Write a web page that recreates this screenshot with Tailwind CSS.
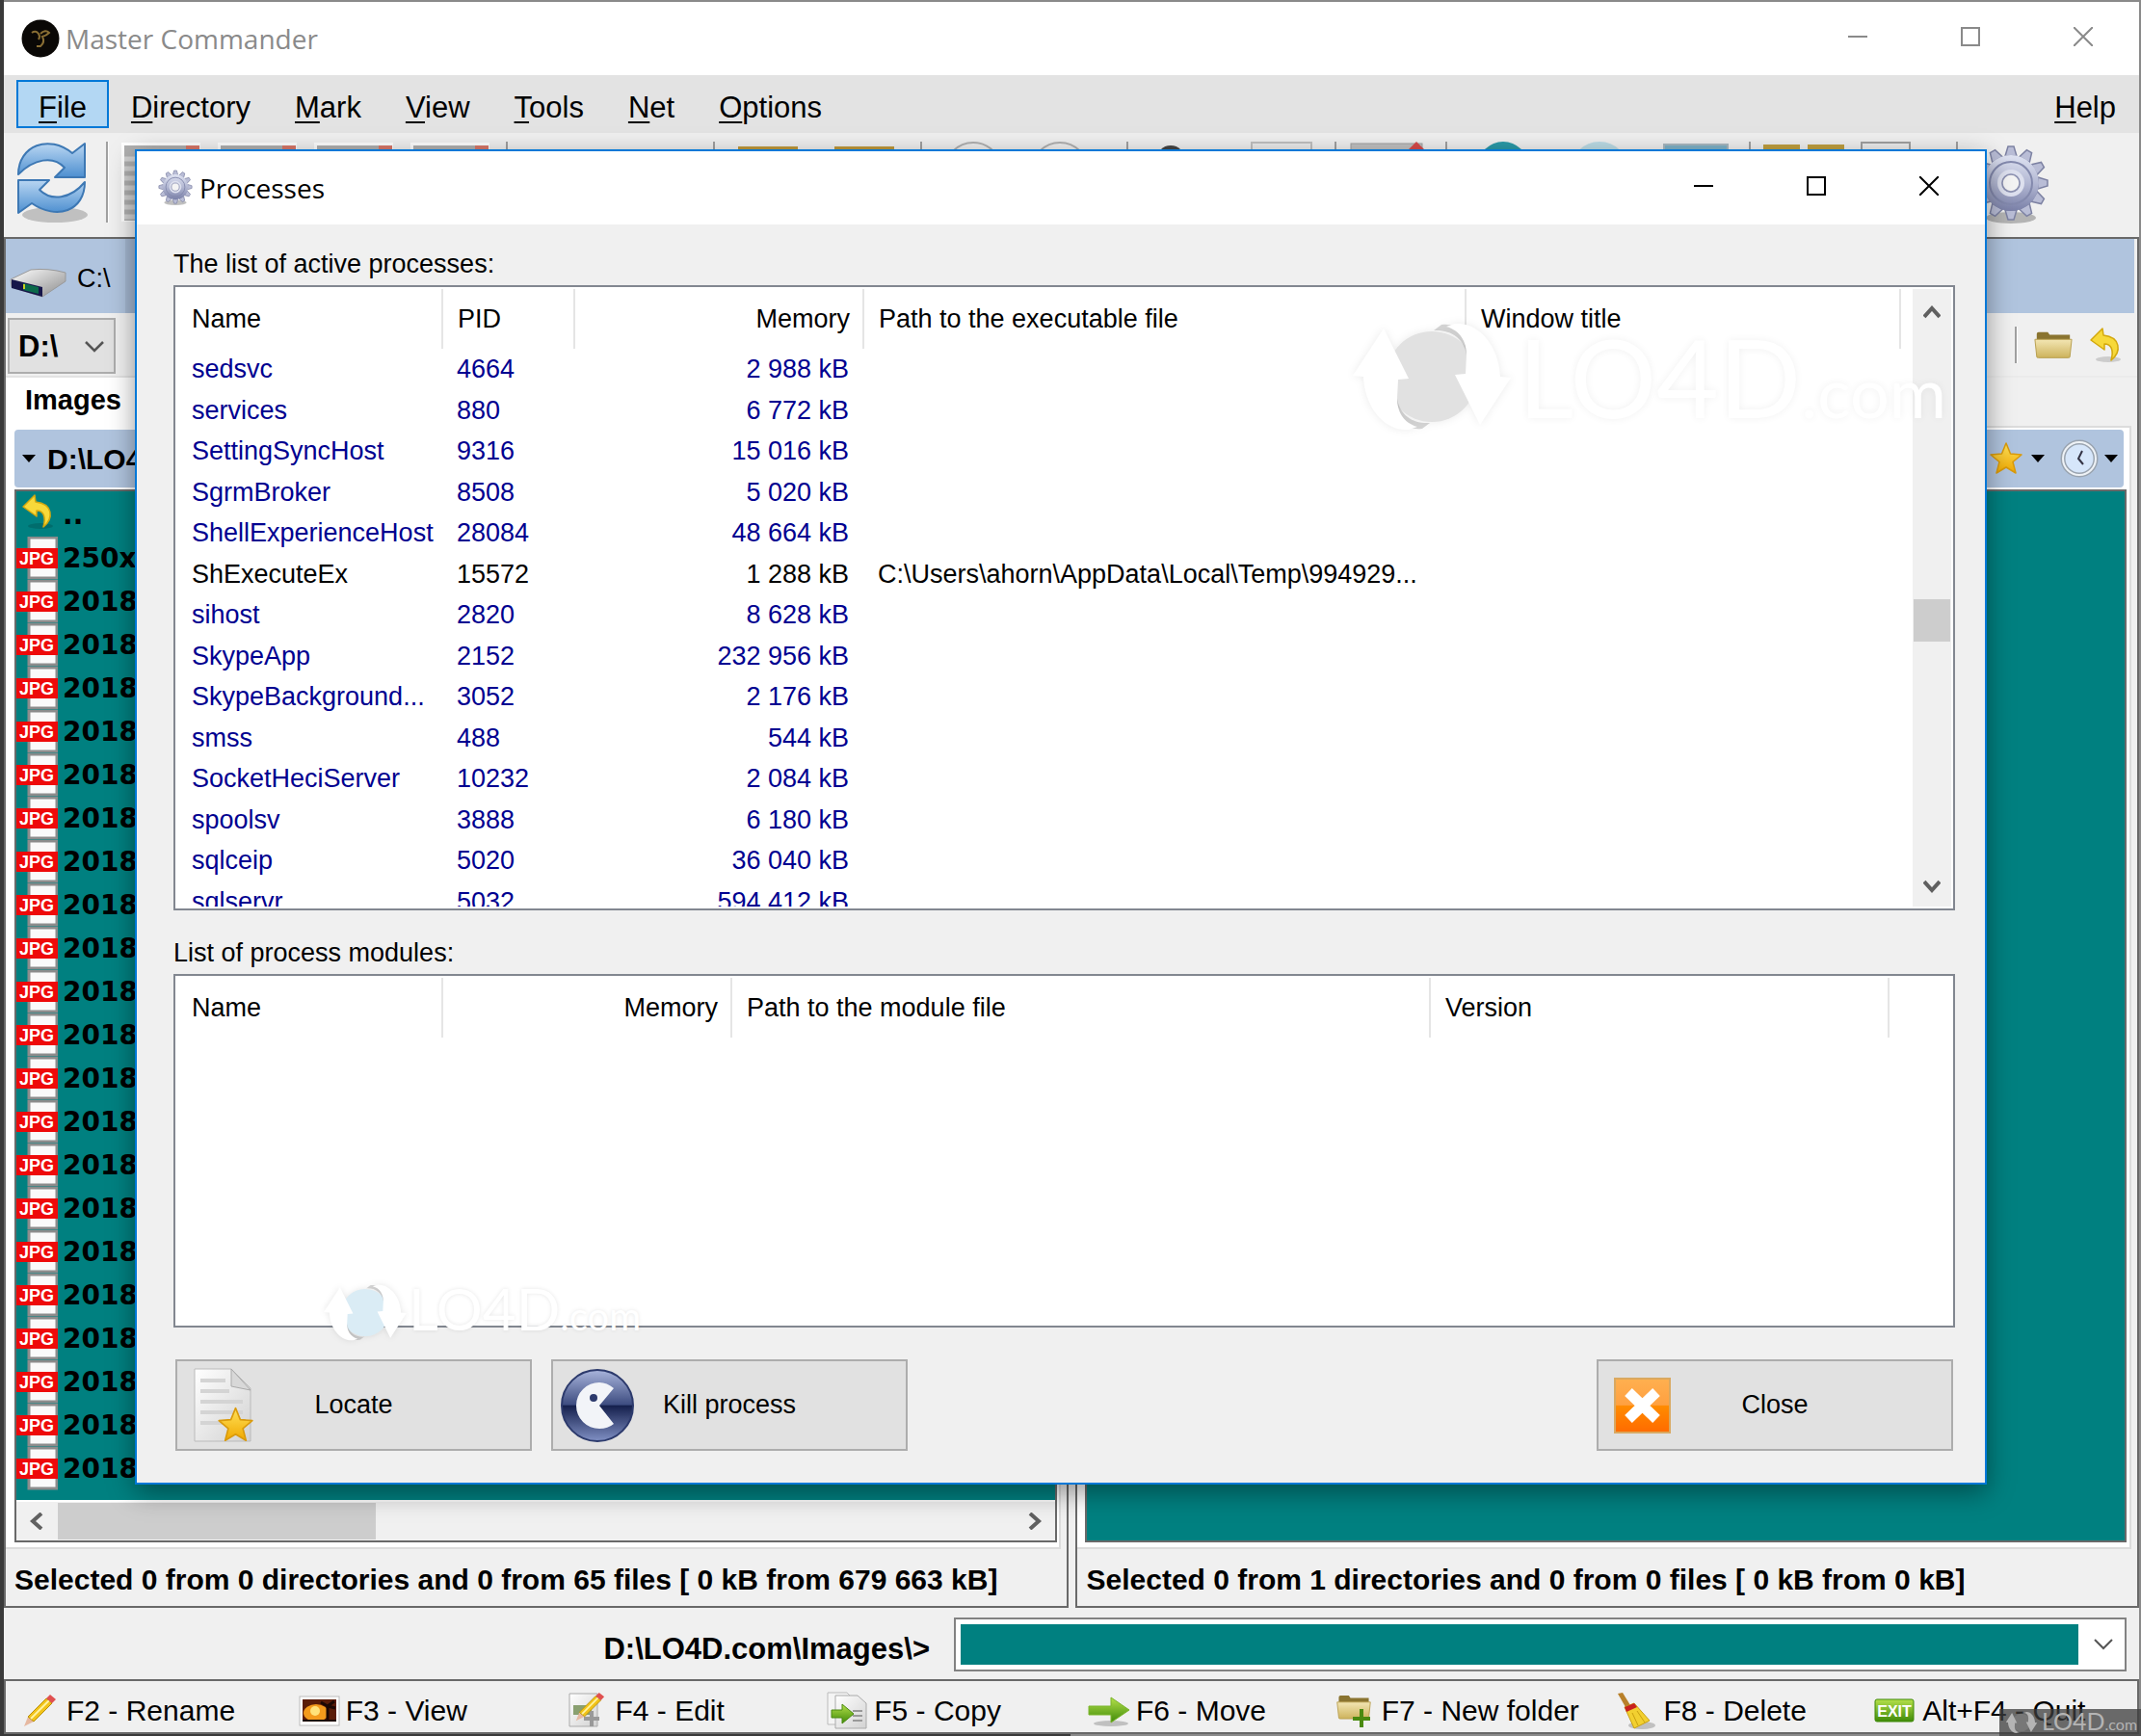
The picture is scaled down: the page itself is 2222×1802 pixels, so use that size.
<!DOCTYPE html>
<html lang="en">
<head>
    <meta charset="UTF-8">
    <meta name="viewport" content="width=device-width, initial-scale=1.0">
    <title>Master Commander</title>
    <script src="https://cdn.jsdelivr.net/npm/@tailwindcss/browser@4"></script>
</head>
<body class="bg-[#3a3a3a] font-['Liberation_Sans',sans-serif] text-black overflow-hidden">

<!-- Shared icon shapes -->
<svg class="absolute w-0 h-0" aria-hidden="true">
    <defs>
        <linearGradient id="gearFill" x1="0" y1="0" x2="0" y2="1"><stop offset="0" stop-color="#dfe3f2"/><stop offset=".5" stop-color="#b3b8d3"/><stop offset="1" stop-color="#7a80a8"/></linearGradient>
        <linearGradient id="blueFill" x1="0" y1="0" x2="0" y2="1"><stop offset="0" stop-color="#b9d6f2"/><stop offset="1" stop-color="#4d8fd0"/></linearGradient>
        <linearGradient id="killFill" x1="0" y1="0" x2="0" y2="1"><stop offset="0" stop-color="#a9b5dc"/><stop offset=".49" stop-color="#3d4c80"/><stop offset=".5" stop-color="#141f4c"/><stop offset="1" stop-color="#8090c4"/></linearGradient>
        <linearGradient id="orangeFill" x1="0" y1="0" x2="0" y2="1"><stop offset="0" stop-color="#ffb050"/><stop offset=".49" stop-color="#ffa040"/><stop offset=".5" stop-color="#ff8c00"/><stop offset="1" stop-color="#ff6a00"/></linearGradient>
        <linearGradient id="starFill" x1="0" y1="0" x2="0" y2="1"><stop offset="0" stop-color="#ffe25a"/><stop offset="1" stop-color="#f0a800"/></linearGradient>
        <linearGradient id="pageFill" x1="0" y1="0" x2="1" y2="1"><stop offset="0" stop-color="#ffffff"/><stop offset="1" stop-color="#d2d2d2"/></linearGradient>
        <linearGradient id="folderFill" x1="0" y1="0" x2="0" y2="1"><stop offset="0" stop-color="#f3e6b4"/><stop offset="1" stop-color="#cdb35c"/></linearGradient>
        <linearGradient id="greenFill" x1="0" y1="0" x2="0" y2="1"><stop offset="0" stop-color="#b4e04a"/><stop offset="1" stop-color="#3f8a08"/></linearGradient>
        <linearGradient id="driveFill" x1="0" y1="0" x2="1" y2="1"><stop offset="0" stop-color="#ffffff"/><stop offset="1" stop-color="#8c8c8c"/></linearGradient>

        <symbol id="gear" viewBox="0 0 80 84">
            <ellipse cx="40" cy="76" rx="26" ry="6" fill="#000" opacity=".25"/>
            <g fill="#b9bdd6" stroke="#7d82a3" stroke-width="1.5">
                <path id="tooth" d="M34 12 L37 2 H43 L46 12 Z"/>
                <use href="#tooth" transform="rotate(30 40 40)"/><use href="#tooth" transform="rotate(60 40 40)"/>
                <use href="#tooth" transform="rotate(90 40 40)"/><use href="#tooth" transform="rotate(120 40 40)"/>
                <use href="#tooth" transform="rotate(150 40 40)"/><use href="#tooth" transform="rotate(180 40 40)"/>
                <use href="#tooth" transform="rotate(210 40 40)"/><use href="#tooth" transform="rotate(240 40 40)"/>
                <use href="#tooth" transform="rotate(270 40 40)"/><use href="#tooth" transform="rotate(300 40 40)"/>
                <use href="#tooth" transform="rotate(330 40 40)"/>
            </g>
            <circle cx="40" cy="40" r="29" fill="url(#gearFill)"/>
            <circle cx="40" cy="40" r="22" fill="none" stroke="#8389ad" stroke-width="2"/>
            <circle cx="40" cy="40" r="12" fill="none" stroke="#dde0ee" stroke-width="4"/>
            <circle cx="40" cy="40" r="9" fill="#f4f4f4" stroke="#8c91b0" stroke-width="1.5"/>
        </symbol>
        <symbol id="logo" viewBox="0 0 172 124">
            <circle cx="86" cy="62" r="47" class="disc"/>
            <g id="logoArrow">
                <path d="M50 85 C53 102 66 111 84 110 L76 116 C60 118 50 108 47 95 Z" fill="#888" opacity=".35"/>
                <path fill="currentColor" d="M36 12 L4 61 L15 62 C16 92 36 119 62 117 L71 114 C56 110 50 97 50 85 L51 65 L62 64 Z"/>
            </g>
            <use href="#logoArrow" transform="rotate(180 86 62)"/>
        </symbol>
        <symbol id="star" viewBox="0 0 36 36"><path d="M18 2 L22.500 13 L34 14 L25 21.500 L28 33 L18 27 L8 33 L11 21.500 L2 14 L13.500 13 Z" fill="url(#starFill)" stroke="#d99a0c" stroke-width="1.5" stroke-linejoin="round"/></symbol>
        <symbol id="undo" viewBox="0 0 34 38">
            <ellipse cx="20" cy="34" rx="13" ry="3" fill="#000" opacity=".15"/>
            <path d="M14 2 L2 14 L16 24 V18 C23 18 26 24 23 35 C34 26 33 11 15 9 Z" fill="#f7d93a" stroke="#d3a80e" stroke-width="1.500" stroke-linejoin="round"/>
        </symbol>
        <symbol id="folder" viewBox="0 0 44 32">
            <path d="M4 4 Q4 2 6 2 H16 L18 5 H40 V12 H4 Z" fill="#8a7430"/>
            <path d="M2 10 H42 L40 29 Q40 30 38 30 H6 Q4 30 4 29 Z" fill="url(#folderFill)" stroke="#b79d4d"/>
        </symbol>
        <symbol id="doc" viewBox="0 0 84 84">
            <rect x="1" y="1" width="82" height="82" fill="#fff"/><rect x="4" y="4" width="70" height="78" fill="#b0b0b0"/>
            <path d="M4 18H74M4 28H74M4 38H74M4 48H74M4 58H74M4 68H74M4 78H74" stroke="#d2d2d2" stroke-width="5"/>
            <rect x="68" y="4" width="14" height="14" fill="#d8786a"/>
        </symbol>
        <symbol id="caret" viewBox="0 0 14 8"><path d="M0 0H14L7 8Z"/></symbol>
        <symbol id="pencil" viewBox="0 0 36 36">
            <path d="M2 34 L6 24 L12 29 Z" fill="#e6b8a0"/><path d="M6 24 L25 5 L31 10 L12 29 Z" fill="#f2c318" stroke="#b8900a"/>
            <path d="M9 26 L28 7" stroke="#fff3a0" stroke-width="2"/><path d="M25 5 L29 1 L35 6 L31 10 Z" fill="#e05050"/>
        </symbol>
    </defs>
</svg>

<div class="relative min-h-screen flex flex-col pl-1 pr-[2px] pb-[2px] bg-[linear-gradient(90deg,#3a3a3a_50%,#8a8a8a_50%)]">

    <!-- Main title bar -->
    <header class="h-[78px] bg-white border-t-2 border-[#8a8a8a] flex items-center">
        <svg class="w-10 h-10 ml-[18px]" viewBox="0 0 40 40"><circle cx="20" cy="20" r="19.500" fill="#0a0806"/><path d="M11 14 Q15 11 18 15 Q20 18 18 21 M20 15 Q25 10 29 14 Q26 17 22 18 Q25 24 20 28 H16" fill="none" stroke="#8a6f34" stroke-width="2"/></svg>
        <h1 class="ml-[6px] flex-1 text-[28px] text-[#8a8a8a] font-['Open_Sans',sans-serif]">Master Commander</h1>
        <div class="flex self-start h-[72px] text-[#8a8a8a]">
            <button aria-label="Minimize" class="w-[117px] flex items-center justify-center"><svg class="w-5 h-5" viewBox="0 0 20 20" fill="none" stroke="currentColor" stroke-width="2"><path d="M0 10H20"/></svg></button>
            <button aria-label="Maximize" class="w-[117px] flex items-center justify-center"><svg class="w-5 h-5" viewBox="0 0 20 20" fill="none" stroke="currentColor" stroke-width="2"><path d="M1 1H19V19H1Z"/></svg></button>
            <button aria-label="Close" class="w-[117px] flex items-center justify-center"><svg class="w-5 h-5" viewBox="0 0 20 20" fill="none" stroke="currentColor" stroke-width="2"><path d="M0 0L20 20M20 0L0 20"/></svg></button>
        </div>
    </header>

    <!-- Menu -->
    <nav class="h-[60px] bg-[#e3e3e3] pl-[13px] pr-1 pt-[5px] pb-[5px] flex text-[31px] leading-[46px]">
        <button class="px-[21px] pt-1 border-2 border-[#0078d7] bg-[#b3d7f3]"><u class="underline-offset-4 decoration-2">F</u>ile</button>
        <button class="px-[21px] pt-1 border-2 border-transparent"><u class="underline-offset-4 decoration-2">D</u>irectory</button>
        <button class="px-[21px] pt-1 border-2 border-transparent"><u class="underline-offset-4 decoration-2">M</u>ark</button>
        <button class="px-[21px] pt-1 border-2 border-transparent"><u class="underline-offset-4 decoration-2">V</u>iew</button>
        <button class="px-[21px] pt-1 border-2 border-transparent"><u class="underline-offset-4 decoration-2">T</u>ools</button>
        <button class="px-[21px] pt-1 border-2 border-transparent"><u class="underline-offset-4 decoration-2">N</u>et</button>
        <button class="px-[21px] pt-1 border-2 border-transparent"><u class="underline-offset-4 decoration-2">O</u>ptions</button>
        <button class="ml-auto px-[18px] pt-1 border-2 border-transparent"><u class="underline-offset-4 decoration-2">H</u>elp</button>
    </nav>

    <!-- Toolbar -->
    <div class="h-[108px] bg-[#f0f0f0] pl-[13px] pt-[9px] flex items-start">
        <button aria-label="Refresh" class="w-[88px]">
            <svg class="w-[76px] h-[86px]" viewBox="0 0 76 86">
                <ellipse cx="40" cy="76" rx="34" ry="8" fill="#000" opacity=".2"/>
                <g stroke="#3d78b4" stroke-width="2" fill="url(#blueFill)" stroke-linejoin="round">
                    <path d="M2 34 C2 4 34 -8 58 12 L71 2 V37 H40 L50 27 C38 14 18 18 2 34 Z"/>
                    <path d="M71 42 C71 72 42 82 16 64 L2 74 V40 H34 L24 50 C36 62 56 60 71 42 Z"/>
                </g>
            </svg>
        </button>
        <span class="w-3 flex justify-center"><i class="w-[3px] h-[84px] border-l-2 border-[#a0a0a0] bg-white"></i></span>
        <button aria-label="View 1" class="w-[100px] pl-[8px]"><svg class="w-[84px] h-[84px]"><use href="#doc"/></svg></button>
        <button aria-label="View 2" class="w-[100px] pl-[8px]"><svg class="w-[84px] h-[84px]"><use href="#doc"/></svg></button>
        <button aria-label="View 3" class="w-[100px] pl-[8px]"><svg class="w-[84px] h-[84px]"><use href="#doc"/></svg></button>
        <button aria-label="View 4" class="w-[100px] pl-[8px]"><svg class="w-[84px] h-[84px]"><use href="#doc"/></svg></button>
        <span class="w-[218px] pl-2"><i class="block w-[2px] h-[84px] bg-[#a0a0a0]"></i></span>
        <span class="w-3 flex justify-center"><i class="w-[2px] h-[84px] bg-[#a0a0a0]"></i></span>
        <button aria-label="Pack" class="w-[100px] flex justify-center pt-[5px]"><i class="w-[62px] h-[60px] bg-[#c09a3c]"></i></button>
        <button aria-label="Unpack" class="w-[100px] flex justify-center pt-[5px]"><i class="w-[62px] h-[60px] bg-[#c09a3c]"></i></button>
        <span class="w-[18px] flex justify-center"><i class="w-[2px] h-[84px] bg-[#a0a0a0]"></i></span>
        <button aria-label="Back" class="w-[90px] flex justify-center"><i class="w-[60px] h-[60px] rounded-full border-2 border-[#b0b0b0]"></i></button>
        <button aria-label="Forward" class="w-[90px] flex justify-center"><i class="w-[60px] h-[60px] rounded-full border-2 border-[#b0b0b0]"></i></button>
        <span class="w-[50px] flex justify-center"><i class="w-[2px] h-[84px] bg-[#a0a0a0]"></i></span>
        <button aria-label="Find" class="w-[40px] flex justify-center pt-[4px]"><i class="w-[30px] h-[30px] rounded-full bg-[#444]"></i></button>
        <button aria-label="Text" class="ml-[45px] w-[100px] flex justify-center"><i class="w-[64px] h-[60px] border-2 border-[#c0c0c0] bg-[#ececec]"></i></button>
        <span class="w-3 flex justify-center"><i class="w-[2px] h-[84px] bg-[#a0a0a0]"></i></span>
        <button aria-label="Edit" class="w-[100px]"><svg class="w-[84px] h-[60px] ml-[8px]" viewBox="0 0 84 60"><rect x="2" y="2" width="74" height="56" fill="#c2c2c2" stroke="#a0a0a0"/><path d="M70 0L80 10L70 20L60 10Z" fill="#d84a4a"/></svg></button>
        <span class="w-[18px] flex justify-center"><i class="w-[2px] h-[84px] bg-[#a0a0a0]"></i></span>
        <button aria-label="Network" class="w-[100px] flex justify-center"><i class="w-[52px] h-[52px] rounded-full bg-[#2a9aa8]"></i></button>
        <button aria-label="FTP" class="w-[100px] flex justify-center"><i class="w-[60px] h-[60px] rounded-full bg-[#bcdce6]"></i></button>
        <button aria-label="Computer" class="w-[100px] flex justify-center pt-[2px]"><i class="w-[68px] h-[52px] bg-[#7fb2c8] border-2 border-[#a8b8c0]"></i></button>
        <span class="w-3 flex justify-center"><i class="w-[2px] h-[84px] bg-[#a0a0a0]"></i></span>
        <button aria-label="Compare" class="w-[100px] flex justify-center gap-2 pt-[3px]"><i class="w-[38px] h-[40px] bg-[#c0a040]"></i><i class="w-[38px] h-[40px] bg-[#c0a040]"></i></button>
        <button aria-label="Rename" class="w-[70px] flex justify-center"><i class="w-[52px] h-[60px] border-2 border-[#a0a0a0] bg-[#eee]"></i></button>
        <span class="ml-[33px] w-3 flex justify-center"><i class="w-[2px] h-[84px] bg-[#a0a0a0]"></i></span>
        <button aria-label="Processes" class="w-[100px] flex justify-center pt-[3px]"><svg class="w-20 h-[84px]"><use href="#gear"/></svg></button>
    </div>

    <!-- File panels -->
    <main class="flex-1 grid grid-cols-2 gap-[7px] bg-[#f0f0f0]">
        <section class="border-2 border-[#696969] flex flex-col min-w-0">
            <div class="h-[77px] bg-[#b0c4de] flex items-center text-[27px]">
                <button class="flex items-center gap-[10px] pl-1 pt-[6px] w-[124px] h-full">
                    <svg class="w-[60px] h-8 mt-2" viewBox="0 0 60 32"><path d="M1 12 L22 2 Q40 0 58 5 V14 L34 30 L2 20 Z" fill="url(#driveFill)" stroke="#999"/><path d="M2 12 L34 20 V30 L2 21 Z" fill="#16164a"/><path d="M14 16 L30 20 V27 L14 23 Z" fill="#0b6a4a"/><path d="M15 17V22" stroke="#c8d020" stroke-width="2"/></svg>
                    C:\
                </button>
                <button class="flex-1 h-full bg-[#a4b7d0]" aria-label="D:\"></button>
            </div>
            <div class="h-[67px] px-[2px] pt-[5px] border-b-2 border-[#e3e3e3]">
                <div class="relative w-[112px] h-[58px]">
                    <select aria-label="Drive" class="appearance-none w-full h-full pl-[9px] pt-[2px] bg-[#e1e1e1] border-2 border-[#adadad] font-bold text-[31px]"><option>D:\</option></select>
                    <svg class="absolute right-3 top-[24px] w-5 h-3 pointer-events-none" viewBox="0 0 20 12" fill="none" stroke="#555" stroke-width="2.500"><path d="M1 1L10 10L19 1"/></svg>
                </div>
            </div>
            <div class="flex-1 flex flex-col bg-white pl-[9px] pr-[2px] pb-[5px] mr-[6px] border-r-2 border-b-2 border-[#dcdcdc]">
                <div class="h-[54px] pl-[11px] text-[29px] leading-[46px] font-bold">Images</div>
                <div class="h-[60px] mb-[2px] rounded-l-[4px] bg-[#b0c4de] flex items-center gap-[12px] pl-[8px] text-[30px] font-bold">
                    <svg class="w-[14px] h-2"><use href="#caret"/></svg>D:\LO4D
                </div>
                <div class="flex-1 flex flex-col border-2 border-[#696969] bg-[#008080]">
                    <ul id="fileList" class="flex-1 pt-[2px] font-['DejaVu_Sans',sans-serif] font-bold text-[28px] leading-[46px]"></ul>
                    <div class="h-[42px] bg-[#f0f0f0] border-t-2 border-white flex items-center">
                        <button aria-label="Scroll left" class="w-[43px] pl-[12px]"><svg class="w-4 h-[18px]" viewBox="0 0 16 18" fill="none" stroke="#606060" stroke-width="4"><path d="M14 1L5 9L14 17"/></svg></button>
                        <i class="w-[330px] h-[38px] bg-[#cdcdcd]"></i>
                        <button aria-label="Scroll right" class="ml-auto w-[43px] pl-[15px]"><svg class="w-4 h-[18px]" viewBox="0 0 16 18" fill="none" stroke="#606060" stroke-width="4"><path d="M2 1L11 9L2 17"/></svg></button>
                    </div>
                </div>
            </div>
            <p class="h-[59px] pl-[9px] font-bold text-[30px] leading-[64px] whitespace-nowrap">Selected 0 from 0 directories and 0 from 65 files [ 0 kB from 679 663 kB]</p>
        </section>

        <section class="border-2 border-[#696969] flex flex-col min-w-0">
            <div class="h-[77px] mr-[3px] bg-[#b0c4de]"></div>
            <div class="h-[67px] flex items-center justify-end pr-[16px] gap-4 border-b-2 border-[#ebebeb]">
                <i class="w-[3px] h-[38px] border-l-2 border-[#a0a0a0] bg-white"></i>
                <button aria-label="Open folder"><svg class="w-[42px] h-8"><use href="#folder"/></svg></button>
                <button aria-label="Up"><svg class="w-[34px] h-[38px]"><use href="#undo"/></svg></button>
            </div>
            <div class="h-[50px]"></div>
            <div class="flex-1 flex flex-col bg-white pl-[8px] pr-[3px] pt-[2px] pb-[5px] mr-[6px] border-t-2 border-r-2 border-b-2 border-[#dcdcdc]">
                <div class="h-[60px] mb-[2px] mr-[3px] rounded-[4px] bg-[#b0c4de] flex items-center justify-end pr-[6px]">
                    <button aria-label="Favourites" class="flex items-center gap-2"><svg class="w-9 h-9"><use href="#star"/></svg><svg class="w-[14px] h-2"><use href="#caret"/></svg></button>
                    <button aria-label="History" class="flex items-center gap-[6px] ml-4">
                        <svg class="w-10 h-10" viewBox="0 0 40 40"><circle cx="20" cy="20" r="17" fill="#d6e6fa" stroke="#9aa4b0" stroke-width="5"/><circle cx="20" cy="20" r="17" fill="none" stroke="#eef2f6" stroke-width="2"/><path d="M23 12L19 20L24 26" fill="none" stroke="#334" stroke-width="2"/></svg>
                        <svg class="w-[14px] h-2"><use href="#caret"/></svg>
                    </button>
                </div>
                <div class="flex-1 border-2 border-[#696969] bg-[#008080]"></div>
            </div>
            <p class="h-[59px] pl-[10px] font-bold text-[30px] leading-[64px] whitespace-nowrap">Selected 0 from 1 directories and 0 from 0 files [ 0 kB from 0 kB]</p>
        </section>
    </main>

    <!-- Command line -->
    <div class="h-[74px] bg-[#f0f0f0] pt-[10px] pr-[13px] grid grid-cols-[961fr_1217fr] grid-rows-[56px] gap-[25px] text-[31px]">
        <label for="cmd" class="text-right font-bold leading-[66px]">D:\LO4D.com\Images\&gt;</label>
        <div class="border-2 border-[#828282] bg-white p-[5px] flex items-center">
            <input id="cmd" class="flex-1 h-full bg-[#008080] text-white outline-none">
            <button aria-label="Command history" class="w-[43px] pl-4"><svg class="w-5 h-3" viewBox="0 0 20 12" fill="none" stroke="#555" stroke-width="2"><path d="M1 1L10 10L19 1"/></svg></button>
        </div>
    </div>

    <!-- Function keys -->
    <footer class="h-[57px] bg-[#f0f0f0] border-2 border-[#696969] pl-[13px] grid grid-cols-[290fr_280fr_269fr_272fr_255fr_293fr_269fr_273fr] text-[30px] leading-[62px] whitespace-nowrap">
        <button class="flex items-center gap-[6px]"><svg class="w-11 h-9"><use href="#pencil"/></svg>F2 - Rename</button>
        <button class="flex items-center gap-[6px]"><svg class="w-11 h-9" viewBox="0 0 44 36"><rect x="2" y="3" width="41" height="30" fill="#fff" stroke="#bbb"/><rect x="5" y="6" width="35" height="23" fill="#5a1c08"/><ellipse cx="19" cy="20" rx="13" ry="9" fill="#f39a1c"/><circle cx="18" cy="18" r="5" fill="#ffe27a"/><path d="M31 29V12M31 13L24 9M31 13L38 8M31 13L39 15" stroke="#1c0804" stroke-width="3"/><path d="M5 27H40V29H5Z" fill="#1c0804"/></svg>F3 - View</button>
        <button class="flex items-center gap-[6px]"><svg class="w-11 h-10" viewBox="0 0 44 40"><path d="M3 2H32V36H3Z" fill="url(#pageFill)" stroke="#aaa"/><path d="M7 14H26V24H7Z" fill="#8aa070"/><path d="M18 28H34M26 20V36" stroke="#999" stroke-width="4"/><svg x="6" y="0" width="36" height="32"><use href="#pencil"/></svg></svg>F4 - Edit</button>
        <button class="flex items-center gap-[6px]"><svg class="w-11 h-10" viewBox="0 0 44 40"><path d="M2 1H22L28 7V34H2Z" fill="#f4f4f4" stroke="#bbb"/><path d="M10 4H33L42 12V38H10Z" fill="url(#pageFill)" stroke="#aaa"/><path d="M28 20H38M28 25H38M28 30H38" stroke="#999" stroke-width="2"/><path d="M6 19H17V13L29 23L17 33V27H6Z" fill="url(#greenFill)" stroke="#4a8a10"/></svg>F5 - Copy</button>
        <button class="flex items-center gap-[6px]"><svg class="w-11 h-9" viewBox="0 0 44 36"><ellipse cx="24" cy="31" rx="18" ry="3" fill="#000" opacity=".2"/><path d="M1 13H24V4L43 17L24 30V22H1Z" fill="url(#greenFill)" stroke="#7ab52a"/></svg>F6 - Move</button>
        <button class="flex items-center gap-[6px]"><svg class="w-11 h-10" viewBox="0 0 44 40"><svg x="2" y="2" width="38" height="28"><use href="#folder"/></svg><path d="M29 18V37M20 28H38" stroke="#4a8a10" stroke-width="4"/></svg>F7 - New folder</button>
        <button class="flex items-center gap-[6px]"><svg class="w-11 h-10" viewBox="0 0 44 40"><ellipse cx="28" cy="35" rx="14" ry="4" fill="#000" opacity=".2"/><path d="M3 2L8 1L16 14L11 16Z" fill="#b8802a"/><path d="M10 16L20 12L36 30L20 38Z" fill="#f2d030" stroke="#c8a010"/><path d="M10 16L20 12L23 16L12 21Z" fill="#c82020"/><path d="M18 22L24 35M23 20L31 32" stroke="#c8a010"/></svg>F8 - Delete</button>
        <button class="flex items-center gap-[6px]"><svg class="w-11 h-7" viewBox="0 0 44 28"><rect x="1" y="2" width="40" height="23" rx="2" fill="url(#greenFill)" stroke="#3f8a08"/><text x="21" y="20" text-anchor="middle" font-family="Liberation Sans" font-weight="bold" font-size="16" fill="#fff">EXIT</text></svg>Alt+F4 - Quit</button>
    </footer>

    <!-- Processes window -->
    <div role="dialog" aria-labelledby="dlgTitle" class="absolute left-[140px] right-[160px] top-[155px] border-2 border-[#0078d7] bg-[#f0f0f0] shadow-[0_8px_26px_rgba(0,0,0,0.4)]">
        <div class="h-[76px] bg-white flex items-center">
            <svg class="w-[36px] h-[38px] ml-[22px]"><use href="#gear"/></svg>
            <h2 id="dlgTitle" class="ml-[7px] flex-1 text-[28px] font-['Open_Sans',sans-serif]">Processes</h2>
            <div class="flex self-start h-[72px]">
                <button aria-label="Minimize" class="w-[117px] flex items-center justify-center"><svg class="w-5 h-5" viewBox="0 0 20 20" fill="none" stroke="currentColor" stroke-width="2"><path d="M0 10H20"/></svg></button>
                <button aria-label="Maximize" class="w-[117px] flex items-center justify-center"><svg class="w-5 h-5" viewBox="0 0 20 20" fill="none" stroke="currentColor" stroke-width="2"><path d="M1 1H19V19H1Z"/></svg></button>
                <button aria-label="Close" class="w-[117px] flex items-center justify-center"><svg class="w-5 h-5" viewBox="0 0 20 20" fill="none" stroke="currentColor" stroke-width="2"><path d="M0 0L20 20M20 0L0 20"/></svg></button>
            </div>
        </div>

        <div class="pl-[38px] pr-[31px] pt-[21px] pb-[33px] text-[27px]">
            <h3 class="leading-10 mb-[2px]">The list of active processes:</h3>
            <div class="h-[649px] border-2 border-[#828790] bg-white p-[2px] flex overflow-hidden">
                <div class="flex-1 overflow-hidden">
                    <table class="w-full table-fixed leading-[42px]">
                        <colgroup>
                            <col class="w-[275px]"><col class="w-[137px]"><col class="w-[300px]"><col class="w-[625px]"><col class="w-[451px]"><col>
                        </colgroup>
                        <thead>
                            <tr class="h-[62px] text-left">
                                <th class="font-normal pl-[15px] border-r-2 border-[#e5e5e5]">Name</th>
                                <th class="font-normal pl-[15px] border-r-2 border-[#e5e5e5]">PID</th>
                                <th class="font-normal pr-[13px] border-r-2 border-[#e5e5e5] text-right">Memory</th>
                                <th class="font-normal pl-[15px] border-r-2 border-[#e5e5e5]">Path to the executable file</th>
                                <th class="font-normal pl-[15px] border-r-2 border-[#e5e5e5]">Window title</th>
                                <th></th>
                            </tr>
                        </thead>
                        <tbody id="processRows"></tbody>
                    </table>
                </div>
                <div class="w-[40px] bg-[#f0f0f0] flex flex-col items-center">
                    <button aria-label="Scroll up" class="h-[46px]"><svg class="w-[18px] h-4" viewBox="0 0 18 16" fill="none" stroke="#606060" stroke-width="4"><path d="M1 14L9 5L17 14"/></svg></button>
                    <i class="w-[38px] h-[44px] mt-[276px] bg-[#cdcdcd]"></i>
                    <button aria-label="Scroll down" class="h-[40px] mt-auto"><svg class="w-[18px] h-4" viewBox="0 0 18 16" fill="none" stroke="#606060" stroke-width="4"><path d="M1 2L9 11L17 2"/></svg></button>
                </div>
            </div>

            <h3 class="leading-10 mt-[24px] mb-[2px]">List of process modules:</h3>
            <div class="h-[367px] border-2 border-[#828790] bg-white p-[2px]">
                <table class="w-full table-fixed">
                    <colgroup>
                        <col class="w-[275px]"><col class="w-[300px]"><col class="w-[725px]"><col class="w-[476px]"><col>
                    </colgroup>
                    <thead>
                        <tr class="h-[62px] text-left">
                            <th class="font-normal pl-[15px] border-r-2 border-[#e5e5e5]">Name</th>
                            <th class="font-normal pr-[13px] border-r-2 border-[#e5e5e5] text-right">Memory</th>
                            <th class="font-normal pl-[15px] border-r-2 border-[#e5e5e5]">Path to the module file</th>
                            <th class="font-normal pl-[15px] border-r-2 border-[#e5e5e5]">Version</th>
                            <th></th>
                        </tr>
                    </thead>
                </table>
            </div>

            <div class="flex gap-5 mt-[33px] px-[2px]">
                <button class="w-[370px] h-[95px] border-2 border-[#adadad] bg-[#e1e1e1] grid grid-cols-[84px_1fr_84px] items-center">
                    <svg class="w-[66px] h-20 ml-[14px]" viewBox="0 0 66 80"><path d="M4 2H42L62 22V77H4Z" fill="url(#pageFill)" stroke="#bbb"/><path d="M42 2V20L62 24Z" fill="#d8d8d8" stroke="#aaa"/><path d="M10 14H36M10 25H40M10 36H54M10 47H54M10 58H40" stroke="#d4d4d4" stroke-width="4"/><svg x="27" y="40" width="39" height="40"><use href="#star"/></svg></svg>
                    Locate
                </button>
                <button class="w-[370px] h-[95px] border-2 border-[#adadad] bg-[#e1e1e1] grid grid-cols-[84px_1fr_84px] items-center">
                    <svg class="w-[76px] h-[76px] ml-2" viewBox="0 0 76 76"><circle cx="38" cy="38" r="37" fill="url(#killFill)" stroke="#2c3a6c" stroke-width="2"/><path d="M55 20 Q48 14 40 14 A24 24 0 0 0 40 62 Q49 62 55 57 L40 38 Z" fill="#f2f4f8"/><circle cx="34" cy="30" r="4" fill="#2c3a6c"/></svg>
                    Kill process
                </button>
                <button class="ml-auto w-[370px] h-[95px] border-2 border-[#adadad] bg-[#e1e1e1] grid grid-cols-[84px_1fr_84px] items-center">
                    <svg class="w-[60px] h-[60px] ml-4" viewBox="0 0 60 60"><rect x="1" y="2" width="57" height="56" fill="url(#orangeFill)" stroke="#d9a860" stroke-width="2"/><path d="M15 16L44 44M44 16L15 44" stroke="#fff" stroke-width="11"/></svg>
                    Close
                </button>
            </div>
        </div>

        <!-- Watermarks over the lists -->
        <div class="absolute right-[40px] top-[168px] flex font-['Lato',sans-serif] text-white pointer-events-none">
            <svg class="w-[172px] h-[124px] mt-[4px] drop-shadow-[0_0_4px_rgba(0,0,0,0.08)]"><use href="#logo" fill="#e1e1e1"/></svg>
            <span class="text-[112px] leading-[124px] ml-1 mt-[4px] [text-shadow:0_0_8px_rgba(0,0,0,0.06)]">LO4D<span class="text-[72px]">.com</span></span>
        </div>
        <div class="absolute left-[192px] top-[1171px] flex items-center font-['Lato',sans-serif] text-white pointer-events-none">
            <svg class="w-[90px] h-[65px] drop-shadow-[0_0_3px_rgba(0,0,0,0.1)]"><use href="#logo" fill="#daecf5"/></svg>
            <span class="text-[60px] leading-[60px] [text-shadow:0_0_4px_rgba(0,0,0,0.1)]">LO4D<span class="text-[40px]">.com</span></span>
        </div>
    </div>

    <div class="absolute right-0 bottom-0 w-[147px] h-[28px] bg-[#3c3c3c]/75 flex items-center gap-1 pl-[6px] font-['Lato',sans-serif] text-[#b4b4b4] pointer-events-none">
        <svg class="w-[34px] h-[26px]"><use href="#logo" fill="#777"/></svg>
        <span class="text-[25px] leading-7">LO4D<span class="text-[16px]">.com</span></span>
    </div>
</div>

<script>
const processes = [
    { name: "sedsvc", pid: 4664, memory: "2 988 kB", path: "" },
    { name: "services", pid: 880, memory: "6 772 kB", path: "" },
    { name: "SettingSyncHost", pid: 9316, memory: "15 016 kB", path: "" },
    { name: "SgrmBroker", pid: 8508, memory: "5 020 kB", path: "" },
    { name: "ShellExperienceHost", pid: 28084, memory: "48 664 kB", path: "" },
    { name: "ShExecuteEx", pid: 15572, memory: "1 288 kB", path: "C:\\Users\\ahorn\\AppData\\Local\\Temp\\994929..." },
    { name: "sihost", pid: 2820, memory: "8 628 kB", path: "" },
    { name: "SkypeApp", pid: 2152, memory: "232 956 kB", path: "" },
    { name: "SkypeBackground...", pid: 3052, memory: "2 176 kB", path: "" },
    { name: "smss", pid: 488, memory: "544 kB", path: "" },
    { name: "SocketHeciServer", pid: 10232, memory: "2 084 kB", path: "" },
    { name: "spoolsv", pid: 3888, memory: "6 180 kB", path: "" },
    { name: "sqlceip", pid: 5020, memory: "36 040 kB", path: "" },
    { name: "sqlservr", pid: 5032, memory: "594 412 kB", path: "" }
];

document.getElementById('processRows').innerHTML = processes.map(p => `
    <tr class="odd:h-[42px] even:h-[43px] whitespace-nowrap ${p.path ? 'text-black' : 'text-[#000090]'}">
        <td class="pl-[15px]">${p.name}</td>
        <td class="pl-[15px]">${p.pid}</td>
        <td class="pr-[15px] text-right">${p.memory}</td>
        <td class="pl-[15px]">${p.path}</td>
        <td></td>
        <td></td>
    </tr>
`).join('');

const files = ["250x", ...Array(21).fill("2018")];

document.getElementById('fileList').innerHTML = `
    <li class="h-[45px] flex gap-[9px] pl-[5px]"><svg class="w-[34px] h-[38px]"><use href="#undo"/></svg>..</li>
` + files.map(name => `
    <li class="h-[45px] flex gap-[5px]">
        <svg class="w-[43px] h-[45px]" viewBox="0 0 43 45">
            <rect x="13" y="1" width="29" height="42" fill="#fafafa" stroke="#8c8c8c" stroke-width="3"/>
            <rect x="0" y="12" width="43" height="21" fill="#ee0a0a"/>
            <text x="21" y="29" text-anchor="middle" font-family="Liberation Sans" font-size="18" fill="#fff">JPG</text>
        </svg>${name}
    </li>
`).join('');
</script>
</body>
</html>
